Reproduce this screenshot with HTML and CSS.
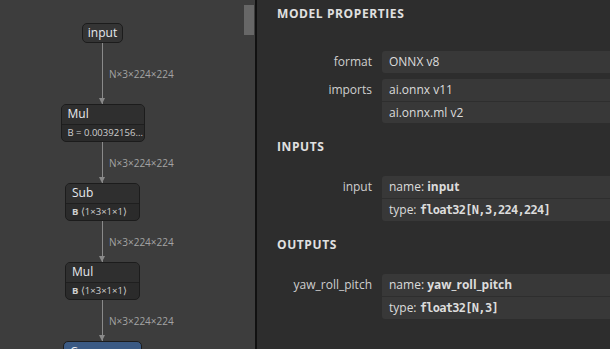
FILE: index.html
```html
<!DOCTYPE html>
<html lang="en">
<head>
  <meta charset="UTF-8" />
  <title>Model Properties</title>
  <link rel="stylesheet" href="styles.css">
</head>
<body>
  <div class="graph">
    <div class="scroll-thumb"></div>
    <div class="flow">
      <div class="node node-input">input</div>
      <div class="edge edge-long"><span class="edge-label">N×3×224×224</span></div>
      <div class="node node-op wide">
        <div class="node-head">Mul</div>
        <div class="node-attr">B = 0.00392156...</div>
      </div>
      <div class="edge"><span class="edge-label">N×3×224×224</span></div>
      <div class="node node-op">
        <div class="node-head">Sub</div>
        <div class="node-attr"><b>B</b> ⟨1×3×1×1⟩</div>
      </div>
      <div class="edge"><span class="edge-label">N×3×224×224</span></div>
      <div class="node node-op">
        <div class="node-head">Mul</div>
        <div class="node-attr"><b>B</b> ⟨1×3×1×1⟩</div>
      </div>
      <div class="edge"><span class="edge-label">N×3×224×224</span></div>
      <div class="node node-conv">
        <div class="node-head">Conv</div>
      </div>
    </div>
  </div>

  <div class="sidebar">
    <div class="section-title first">MODEL PROPERTIES</div>
    <div class="props">
      <div class="prop">
        <div class="prop-name">format</div>
        <div class="prop-value">
          <div class="line">ONNX v8</div>
        </div>
      </div>
      <div class="prop">
        <div class="prop-name">imports</div>
        <div class="prop-value">
          <div class="line">ai.onnx v11</div>
          <div class="line">ai.onnx.ml v2</div>
        </div>
      </div>
    </div>

    <div class="section-title">INPUTS</div>
    <div class="props">
      <div class="prop">
        <div class="prop-name">input</div>
        <div class="prop-value">
          <div class="line">name: <b>input</b></div>
          <div class="line">type: <code>float32[N,3,224,224]</code></div>
        </div>
      </div>
    </div>

    <div class="section-title">OUTPUTS</div>
    <div class="props">
      <div class="prop">
        <div class="prop-name">yaw_roll_pitch</div>
        <div class="prop-value">
          <div class="line">name: <b>yaw_roll_pitch</b></div>
          <div class="line">type: <code>float32[N,3]</code></div>
        </div>
      </div>
    </div>
  </div>
</body>
</html>
```

FILE: styles.css
```css
html, body {
  margin: 0;
  height: 100%;
}

body {
  display: flex;
  overflow: hidden;
  font-family: "Open Sans", "Noto Sans", sans-serif;
  background: #2d2d2d;
}

.graph {
  width: 255px;
  flex: none;
  height: 349px;
  background: #3d3d3d;
  border-right: 2px solid #111;
  position: relative;
  overflow: hidden;
}

.scroll-thumb {
  position: absolute;
  top: 5px;
  right: 1px;
  width: 10px;
  height: 30px;
  background: #676767;
}

.flow {
  width: 205px;
  padding-top: 23px;
  display: flex;
  flex-direction: column;
  align-items: center;
}

.node {
  box-sizing: border-box;
  border: 1px solid #1c1c1c;
  border-radius: 5px;
  color: #e6e9ee;
  font-size: 12px;
}

.node-input {
  width: 41px;
  height: 20px;
  line-height: 18px;
  text-align: center;
  background: #343434;
}

.node-op {
  width: 75px;
  background: #2b2b2b;
  overflow: hidden;
}

.node-op.wide {
  width: 84px;
}

.node-head {
  height: 19px;
  line-height: 18px;
  padding-left: 6px;
  background: #2f2f2f;
  border-bottom: 1px solid #1f1f1f;
}

.node-attr {
  height: 16px;
  line-height: 16px;
  padding-left: 6px;
  font-size: 9.5px;
  color: #cfcfcf;
  white-space: nowrap;
}

.node-conv {
  width: 79px;
  height: 30px;
  background: #3b5a84;
  overflow: hidden;
}

.node-conv .node-head {
  background: none;
  border: 0;
  line-height: 20px;
}

.edge {
  position: relative;
  width: 1px;
  height: 41px;
  background: #8a8a8a;
}

.edge.edge-long {
  height: 61px;
}

.edge::after {
  content: "";
  position: absolute;
  bottom: 0;
  left: -3px;
  border-left: 3.5px solid transparent;
  border-right: 3.5px solid transparent;
  border-top: 6px solid #8a8a8a;
}

.edge-label {
  position: absolute;
  left: 7px;
  top: 50%;
  margin-top: -8px;
  line-height: 16px;
  font-size: 10px;
  color: #a3a3a3;
  white-space: nowrap;
}

.sidebar {
  flex: 1;
  padding-top: 4px;
  color: #dcdcdc;
  font-size: 12px;
}

.section-title {
  line-height: 20px;
  padding-left: 20px;
  margin: 14px 0 19px;
  font-weight: 700;
  letter-spacing: 0.6px;
  font-size: 12px;
  color: #e0e0e0;
}

.section-title.first {
  margin-top: 0;
  margin-bottom: 27px;
}

.props {
  display: flex;
  flex-direction: column;
  gap: 6px;
}

.prop {
  display: flex;
}

.prop-name {
  width: 115px;
  flex: none;
  text-align: right;
  line-height: 22px;
  color: #cfcfcf;
  white-space: nowrap;
}

.prop-value {
  flex: 1;
  margin-left: 10px;
  background: #383838;
  border-radius: 3px 0 0 3px;
}

.line {
  line-height: 22px;
  padding-left: 7px;
  white-space: nowrap;
}

.line + .line {
  line-height: 21px;
  border-top: 1px solid #2e2e2e;
}

.line b {
  font-weight: 700;
}

code {
  font-family: "DejaVu Sans Mono", monospace;
  font-weight: 700;
  font-size: 12px;
  letter-spacing: -0.7px;
}
```
